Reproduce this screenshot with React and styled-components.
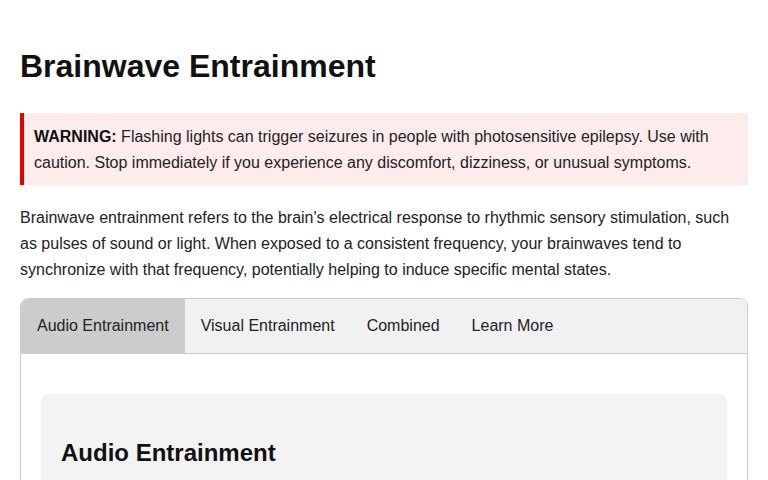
import React, { useState } from "react";
import styled, { createGlobalStyle } from "styled-components";

const Global = createGlobalStyle`
  html, body { margin: 0; padding: 0; background: #fff; }
  body {
    font-family: "Liberation Sans", Arial, sans-serif;
    font-size: 16px;
    line-height: 1.6;
    color: #222;
    padding: 20px;
  }
`;

const Title = styled.h1`
  font-size: 32px;
  font-weight: bold;
  margin: 21.44px 0 20.5px;
  color: #111;
`;

const Warning = styled.div`
  background: #fdeceb;
  border-left: 4px solid #e60000;
  padding: 11px 10px 10px;
  margin-bottom: 20px;
  color: #222;
`;

const Strong = styled.strong`
  color: #111;
`;

const Para = styled.p`
  margin: 16px 0;
`;

const Tabs = styled.div`
  border: 1px solid #ccc;
  border-radius: 8px;
  overflow: hidden;
`;

const TabBar = styled.div`
  display: flex;
  background: #f1f1f1;
  border-bottom: 1px solid #ccc;
`;

const TabButton = styled.button`
  font: inherit;
  color: #222;
  border: none;
  background: ${(p) => (p.$active ? "#ccc" : "transparent")};
  padding: 14.4px 16px;
  cursor: pointer;
`;

const Panel = styled.div`
  padding: 20px;
`;

const Card = styled.section`
  background: #f3f3f3;
  border-radius: 8px;
  padding: 20px;
  margin: 20px 0;
`;

const CardTitle = styled.h2`
  font-size: 24px;
  margin: 19.92px 0;
  color: #111;
`;

const tabs = ["Audio Entrainment", "Visual Entrainment", "Combined", "Learn More"];

export default function App() {
  const [active, setActive] = useState(0);
  return (
    <>
      <Global />
      <Title>Brainwave Entrainment</Title>
      <Warning>
        <Strong>WARNING:</Strong> Flashing lights can trigger seizures in people with photosensitive epilepsy. Use with caution. Stop immediately if you experience any discomfort, dizziness, or unusual symptoms.
      </Warning>
      <Para>
        Brainwave entrainment refers to the brain's electrical response to rhythmic sensory stimulation, such as pulses of sound or light. When exposed to a consistent frequency, your brainwaves tend to synchronize with that frequency, potentially helping to induce specific mental states.
      </Para>
      <Tabs>
        <TabBar>
          {tabs.map((t, i) => (
            <TabButton key={t} $active={i === active} onClick={() => setActive(i)}>
              {t}
            </TabButton>
          ))}
        </TabBar>
        <Panel>
          <Card>
            <CardTitle>{tabs[active]}</CardTitle>
            <Para>
              Audio entrainment uses sound to guide your brainwaves toward a target frequency.
            </Para>
          </Card>
        </Panel>
      </Tabs>
    </>
  );
}
